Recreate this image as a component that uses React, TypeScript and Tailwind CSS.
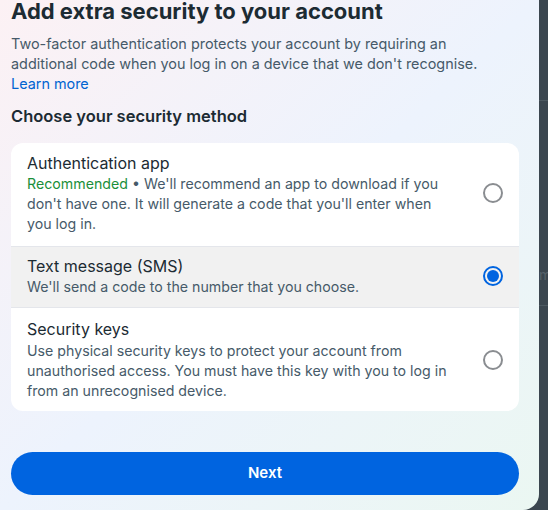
import React from "react";

function Radio({ checked }: { checked?: boolean }) {
  return checked ? (
    <div className="w-[20px] h-[20px] rounded-full border-2 border-[#0064e0] flex items-center justify-center shrink-0">
      <div className="w-[12px] h-[12px] rounded-full bg-[#0064e0]" />
    </div>
  ) : (
    <div className="w-[20px] h-[20px] rounded-full border-2 border-[#8a8d91] shrink-0" />
  );
}

export default function App() {
  return (
    <div
      className="w-[548px] h-[510px] bg-[#3b464f] flex overflow-hidden"
      style={{ fontFamily: "Inter, 'Noto Sans', sans-serif" }}
    >
      <div className="w-[539px] h-[510px] shrink-0 rounded-br-[16px] bg-gradient-to-br from-[#fcf1f4] via-[#edf3fd] to-[#ebf7f2] pl-[11px] pr-[20px] flex flex-col overflow-hidden">
        <h1 className="text-[22px] leading-[28px] font-bold text-[#1c2b33] -mt-[3px]">
          Add extra security to your account
        </h1>
        <p className="mt-[9px] max-w-[490px] text-[14.4px] leading-[20px] text-[#465a69]">
          Two-factor authentication protects your account by requiring an additional code when you log in on a device that we don't recognise.{" "}
          <span className="text-[#0064d1]">Learn more</span>
        </p>
        <h2 className="mt-[11px] text-[16.5px] leading-[22px] font-semibold text-[#1c2b33]">
          Choose your security method
        </h2>
        <div className="mt-[16px] bg-white rounded-[12px] overflow-hidden">
          <div className="flex items-center px-[16px] pt-[9px] pb-[12px] border-b border-[#e4e6eb]">
            <div className="flex-1 mr-[24px]">
              <div className="text-[16px] leading-[22px] text-[#1c2b33]">Authentication app</div>
              <div className="text-[14.2px] leading-[20px] text-[#465a69]">
                <span className="text-[#1a8f3a]">Recommended</span> • We'll recommend an app to download if you don't have one. It will generate a code that you'll enter when you log in.
              </div>
            </div>
            <Radio />
          </div>
          <div className="flex items-center px-[16px] pt-[8px] pb-[10px] bg-[#f1f1f1] border-b border-[#e4e6eb]">
            <div className="flex-1 mr-[24px]">
              <div className="text-[16px] leading-[22px] text-[#1c2b33]">Text message (SMS)</div>
              <div className="text-[14.2px] leading-[20px] text-[#465a69]">
                We'll send a code to the number that you choose.
              </div>
            </div>
            <Radio checked />
          </div>
          <div className="flex items-center px-[16px] pt-[10px] pb-[10px]">
            <div className="flex-1 mr-[24px]">
              <div className="text-[16px] leading-[22px] text-[#1c2b33]">Security keys</div>
              <div className="mt-[1px] text-[14.2px] leading-[20px] text-[#465a69]">
                Use physical security keys to protect your account from unauthorised access. You must have this key with you to log in from an unrecognised device.
              </div>
            </div>
            <Radio />
          </div>
        </div>
        <button className="mt-[41px] h-[43px] rounded-full bg-[#0064e0] text-white text-[15px] font-semibold">
          Next
        </button>
      </div>
      <div className="flex-1 flex flex-col">
        <div className="h-[100px]" />
        <div className="h-px bg-[#4d5961]" />
        <div className="h-[164px]" />
        <div className="text-[14px] leading-[20px] text-[#56626a]">m</div>
        <div className="h-[20px]" />
        <div className="h-px bg-[#4d5961]" />
      </div>
    </div>
  );
}
